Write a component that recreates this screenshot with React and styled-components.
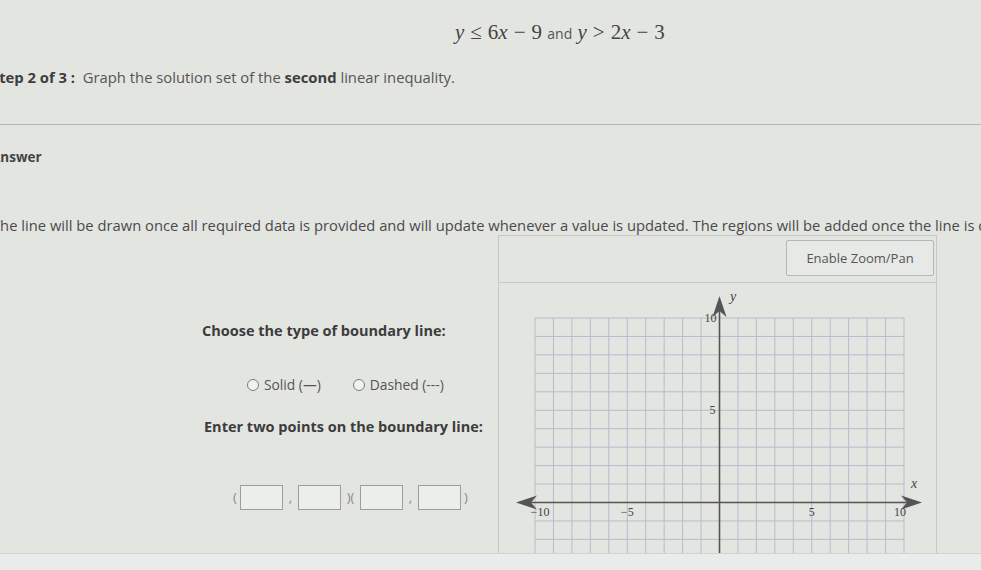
import styled, { createGlobalStyle } from "styled-components";

const GlobalStyle = createGlobalStyle`
  html, body {
    margin: 0;
    padding: 0;
    background: #e3e5e1;
    overflow: hidden;
  }
  body {
    font-family: "Open Sans", "Liberation Sans", sans-serif;
    color: #555;
  }
`;

const UNIT = 18.45;
const X0 = 220.5;
const Y0 = 219.5;
const px = (v) => X0 + v * UNIT;
const py = (v) => Y0 - v * UNIT;

const Graph = () => {
  const vertical = [];
  for (let i = -10; i <= 10; i++) vertical.push(i);
  const horizontal = [];
  for (let j = -3; j <= 10; j++) horizontal.push(j);

  return (
    <svg width="437" height="270" viewBox="0 0 437 270">
      {vertical.map((i) => (
        <line
          key={"v" + i}
          x1={px(i)}
          x2={px(i)}
          y1={py(10)}
          y2={py(-3)}
          stroke="#b3bdcc"
          strokeWidth="1"
        />
      ))}
      {horizontal.map((j) => (
        <line
          key={"h" + j}
          x1={px(-10)}
          x2={px(10)}
          y1={py(j)}
          y2={py(j)}
          stroke="#b3bdcc"
          strokeWidth="1"
        />
      ))}
      <line x1="24" x2="414" y1={Y0} y2={Y0} stroke="#555" strokeWidth="1.6" />
      <line x1={X0} x2={X0} y1="24" y2="270" stroke="#555" strokeWidth="1.6" />
      <path d={`M423,${Y0} L402,${Y0 - 7} L408,${Y0} L402,${Y0 + 7} Z`} fill="#555" />
      <path d={`M17,${Y0} L38,${Y0 - 7} L32,${Y0} L38,${Y0 + 7} Z`} fill="#555" />
      <path d={`M${X0},13 L${X0 - 7},34 L${X0},28 L${X0 + 7},34 Z`} fill="#555" />
      <g fontFamily="'Liberation Serif', serif" fontSize="12" fill="#444">
        <text x={X0 - 3} y={py(10) + 4} textAnchor="end">10</text>
        <text x={X0 - 4} y={py(5) + 4} textAnchor="end">5</text>
        <text x={px(-10) + 5} y={Y0 + 13} textAnchor="middle">−10</text>
        <text x={px(-5)} y={Y0 + 13} textAnchor="middle">−5</text>
        <text x={px(5)} y={Y0 + 13} textAnchor="middle">5</text>
        <text x={px(10) - 4} y={Y0 + 13} textAnchor="middle">10</text>
        <text x="412" y="205" fontStyle="italic" fontSize="14">x</text>
        <text x="231" y="18" fontStyle="italic" fontSize="14">y</text>
      </g>
    </svg>
  );
};

const App = () => {
  return (
    <Page>
      <GlobalStyle />
      <Equation>
        <Var>y</Var>
        <Op>≤</Op>6<Var>x</Var>
        <Op>−</Op>9 <And>and</And> <Var>y</Var>
        <Op>&gt;</Op>2<Var>x</Var>
        <Op>−</Op>3
      </Equation>
      <StepLine>
        <b>Step 2 of 3 :</b>&nbsp;&nbsp;Graph the solution set of the <b>second</b> linear inequality.
      </StepLine>
      <Divider />
      <AnswerLabel>Answer</AnswerLabel>
      <Instruction>
        The line will be drawn once all required data is provided and will update whenever a value is updated. The regions will be added once the line is drawn.
      </Instruction>
      <Main>
        <LeftCol>
          <Heading indent={12}>Choose the type of boundary line:</Heading>
          <RadioRow>
            <RadioOption>
              <Circle /> Solid (—)
            </RadioOption>
            <RadioOption>
              <Circle /> Dashed (---)
            </RadioOption>
          </RadioRow>
          <Heading indent={14} gap={24}>Enter two points on the boundary line:</Heading>
          <PointsRow>
            <Paren width={10}>(</Paren>
            <Box />
            <Paren width={15}>,</Paren>
            <Box />
            <Paren width={19}>)(</Paren>
            <Box />
            <Paren width={15}>,</Paren>
            <Box />
            <Paren width={10}>)</Paren>
          </PointsRow>
        </LeftCol>
        <GraphPanel>
          <Toolbar>
            <ZoomButton>Enable Zoom/Pan</ZoomButton>
          </Toolbar>
          <GraphArea>
            <Graph />
          </GraphArea>
        </GraphPanel>
      </Main>
      <BottomStrip />
    </Page>
  );
};

const Page = styled.div`
  width: 981px;
  height: 570px;
  overflow: hidden;
  display: flex;
  flex-direction: column;
`;

const Equation = styled.div`
  padding: 21px 0 0 455px;
  line-height: 22px;
  font-family: "Liberation Serif", serif;
  font-size: 21px;
  color: #444;
  white-space: nowrap;
`;

const Var = styled.i`
  font-style: italic;
`;

const Op = styled.span`
  margin: 0 6px;
`;

const And = styled.span`
  font-family: "Open Sans", sans-serif;
  font-size: 14px;
  color: #555;
`;

const StepLine = styled.div`
  margin: 22px 0 0 -9px;
  line-height: 20px;
  font-size: 14.8px;
  color: #555;
  white-space: nowrap;

  b {
    color: #3d3d3d;
    font-weight: 700;
  }
`;

const Divider = styled.div`
  margin-top: 37px;
  height: 1px;
  background: #b3b6b5;
`;

const AnswerLabel = styled.div`
  margin: 23px 0 0 -9px;
  line-height: 18px;
  font-size: 13.5px;
  font-weight: 700;
  color: #444;
`;

const Instruction = styled.div`
  margin: 49px 0 0 -8px;
  line-height: 20px;
  font-size: 14.75px;
  color: #4a4a4a;
  white-space: nowrap;
`;

const Main = styled.div`
  display: flex;
  padding-left: 190px;
  height: 318px;
`;

const LeftCol = styled.div`
  width: 308px;
  display: flex;
  flex-direction: column;
  padding-top: 87px;
`;

const Heading = styled.div`
  margin: ${({ gap }) => gap || 0}px 0 0 ${({ indent }) => indent}px;
  line-height: 18px;
  font-size: 14.5px;
  font-weight: 700;
  color: #3c3c3c;
  white-space: nowrap;
`;

const RadioRow = styled.div`
  margin: 36px 0 0 57px;
  display: flex;
  gap: 32px;
  line-height: 18px;
  font-size: 13.8px;
  color: #555;
`;

const RadioOption = styled.label`
  display: flex;
  align-items: center;
  gap: 5px;
  white-space: nowrap;
`;

const Circle = styled.span`
  width: 10px;
  height: 10px;
  border-radius: 50%;
  border: 1px solid #7a7d7d;
  background: #f1f2f0;
`;

const PointsRow = styled.div`
  margin: 48px 0 0 40px;
  display: flex;
  align-items: center;
  height: 26px;
`;

const Paren = styled.span`
  width: ${({ width }) => width}px;
  text-align: center;
  font-size: 13px;
  color: #888;
`;

const Box = styled.span`
  width: 43px;
  height: 25px;
  border: 1px solid #9a9e9e;
  background: #eceeeb;
  box-sizing: border-box;
`;

const GraphPanel = styled.div`
  width: 437px;
  border: 1px solid #c6c9c8;
  border-bottom: none;
  display: flex;
  flex-direction: column;
`;

const Toolbar = styled.div`
  height: 46px;
  display: flex;
  justify-content: flex-end;
  align-items: flex-start;
  padding: 4px 2px 0 0;
  box-sizing: border-box;
`;

const ZoomButton = styled.button`
  width: 148px;
  height: 36px;
  border: 1px solid #b4b8b8;
  border-radius: 2px;
  background: #e7e9e6;
  font-family: "Open Sans", sans-serif;
  font-size: 13px;
  color: #555;
`;

const GraphArea = styled.div`
  border-top: 1px solid #c6c9c8;
  height: 270px;
  overflow: hidden;
`;

const BottomStrip = styled.div`
  flex: 1;
  border-top: 1px solid #cfd3d3;
  background: #e9eceb;
`;

export default App;
